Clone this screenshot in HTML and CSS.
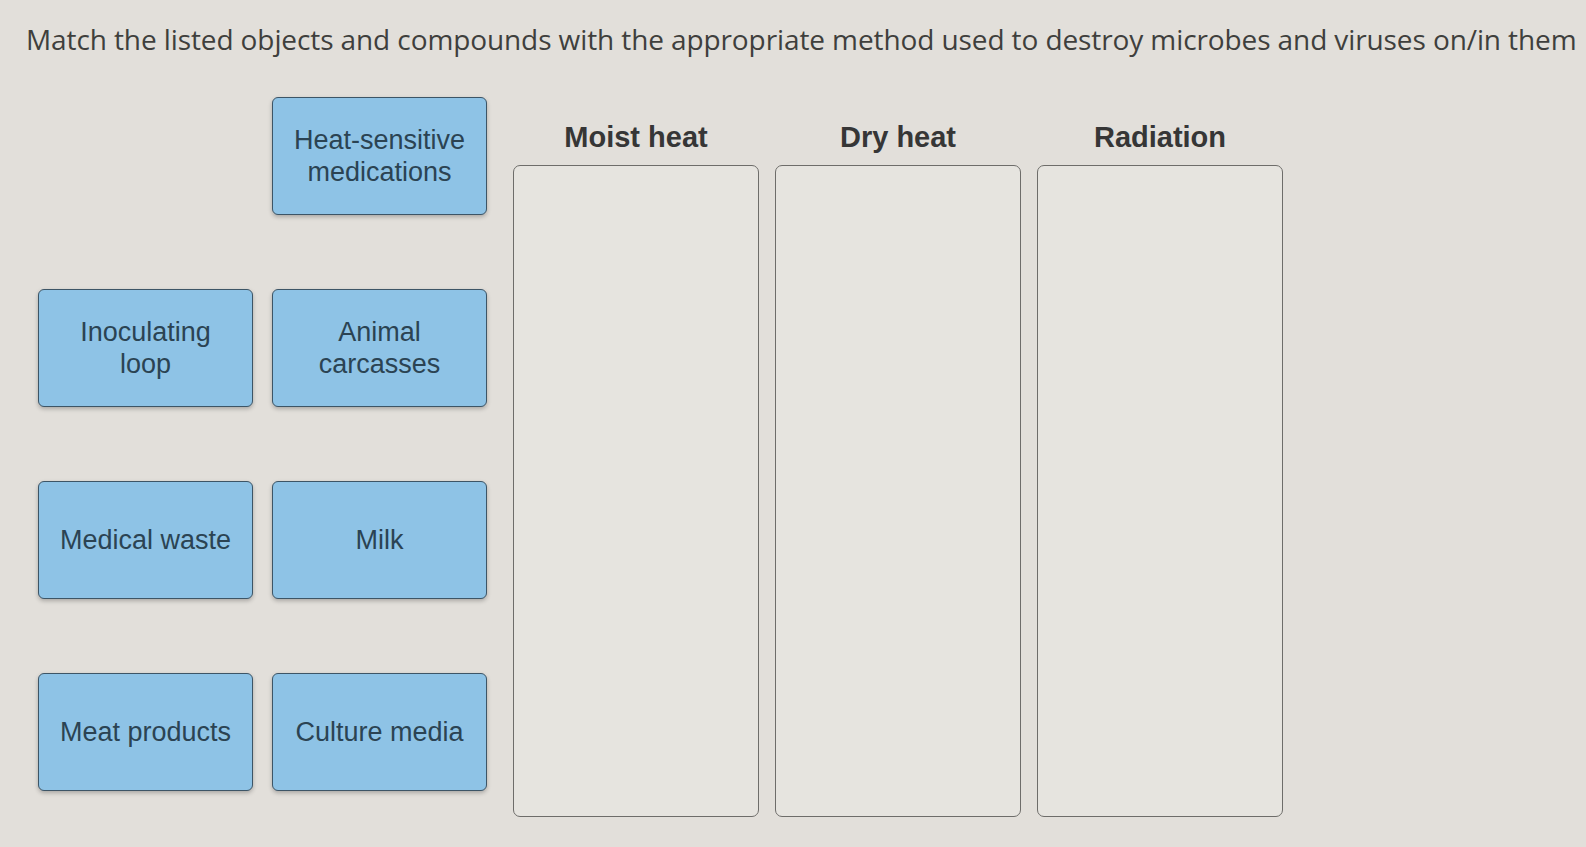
FILE: index.html
```html
<!DOCTYPE html>
<html lang="en">
<head>
    <meta charset="UTF-8">
    <meta name="viewport" content="width=device-width, initial-scale=1.0">
    <title>Sterilization Methods</title>
    <link rel="stylesheet" href="styles.css">
</head>
<body>
    <div class="question">
        <p class="prompt">Match the listed objects and compounds with the appropriate method used to destroy microbes and viruses on/in them</p>

        <div class="workspace">
            <!-- Draggable items -->
            <div class="choices">
                <div class="spacer"></div>
                <div class="chip">Heat-sensitive<br>medications</div>
                <div class="chip">Inoculating<br>loop</div>
                <div class="chip">Animal<br>carcasses</div>
                <div class="chip">Medical waste</div>
                <div class="chip">Milk</div>
                <div class="chip">Meat products</div>
                <div class="chip">Culture media</div>
            </div>

            <!-- Drop targets -->
            <div class="bins">
                <div class="bin">
                    <h3>Moist heat</h3>
                    <div class="drop"></div>
                </div>
                <div class="bin">
                    <h3>Dry heat</h3>
                    <div class="drop"></div>
                </div>
                <div class="bin">
                    <h3>Radiation</h3>
                    <div class="drop"></div>
                </div>
            </div>
        </div>
    </div>
</body>
</html>
```

FILE: styles.css
```css
html, body {
    height: 100%;
}
body {
    margin: 0;
    background-color: #e2dfda;
    color: #3f3f3d;
    font-family: 'Open Sans', 'Liberation Sans', sans-serif;
    overflow: hidden;
}
.question {
    padding: 0 0 0 26px;
}
.prompt {
    margin: 0;
    padding-top: 22px;
    font-size: 28px;
    line-height: 34px;
    white-space: nowrap;
    letter-spacing: -0.1px;
}
.workspace {
    display: flex;
    margin-top: 41px;
}
.choices {
    display: grid;
    grid-template-columns: 215px 215px;
    grid-auto-rows: 118px;
    column-gap: 19px;
    row-gap: 74px;
    margin-left: 12px;
}
.chip {
    display: flex;
    align-items: center;
    justify-content: center;
    text-align: center;
    background-color: #8ec3e6;
    border: 1.5px solid #3d5566;
    border-radius: 6px;
    box-shadow: 0 2px 4px rgba(0, 0, 0, 0.25);
    color: #2b4353;
    font-family: 'Liberation Sans', Arial, sans-serif;
    font-size: 27px;
    line-height: 32px;
}
.bins {
    display: flex;
    gap: 16px;
    margin-left: 26px;
}
.bin {
    width: 246px;
    display: flex;
    flex-direction: column;
}
.bin h3 {
    margin: 24px 0 0;
    height: 44px;
    text-align: center;
    font-family: 'Liberation Sans', Arial, sans-serif;
    font-size: 29px;
    font-weight: bold;
    color: #363636;
}
.drop {
    height: 650px;
    border: 1.5px solid #6e6d6a;
    border-radius: 7px;
    background-color: #e6e4df;
}
```
